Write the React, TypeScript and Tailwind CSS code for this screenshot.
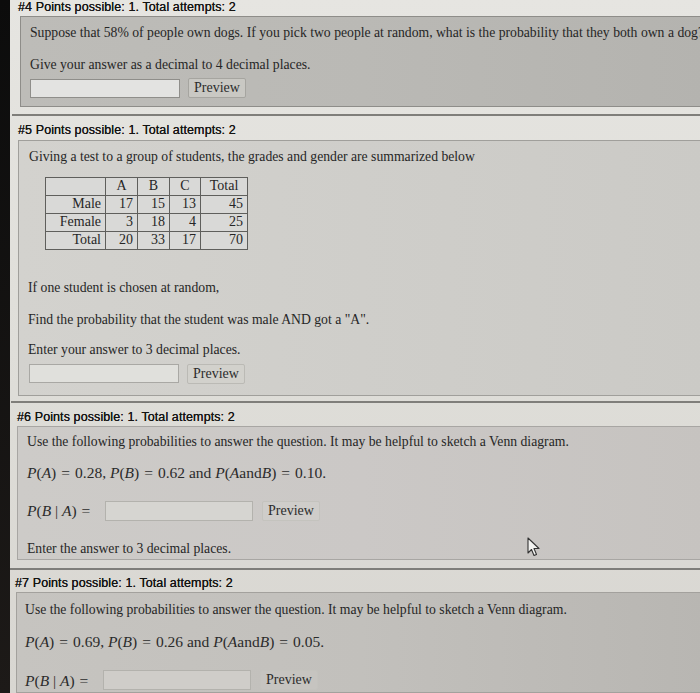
import React from "react";

const serif = "font-['Liberation_Serif','Times_New_Roman',serif]";
const sans = "font-['Liberation_Sans',Arial,sans-serif]";

function Header({ num, className }: { num: number; className: string }) {
  return (
    <div className={`${sans} text-[12.5px] leading-[17px] text-[#141414] tracking-[0.1px] [text-shadow:0_0_0.4px_#141414] ${className}`}>
      #{num} Points possible: 1. Total attempts: 2
    </div>
  );
}

function Divider({ className }: { className: string }) {
  return <div className={`h-[2px] bg-[#7f7e7a] ${className}`} />;
}

function PreviewBtn({ className }: { className: string }) {
  return (
    <button
      className={`${serif} text-[14px] leading-none text-[#2c2c2c] border border-[#a6a5a0] rounded-[2px] flex items-center justify-center ${className}`}>
      Preview
    </button>
  );
}

function Var({ children }: { children: React.ReactNode }) {
  return <i className="italic">{children}</i>;
}

function Eq() {
  return <span className="mx-[5px]">=</span>;
}

function MathLine({ a, b, ab }: { a: string; b: string; ab: string }) {
  return (
    <div className={`${serif} text-[15.5px] leading-[18px] text-[#2b2b2b]`}>
      <Var>P</Var>(<Var>A</Var>)<Eq />
      {a}, <Var>P</Var>(<Var>B</Var>)<Eq />
      {b} and <Var>P</Var>(<Var>A</Var>and<Var>B</Var>)<Eq />
      {ab}.
    </div>
  );
}

function CondRow({ inputBg, btnBg, className }: { inputBg: string; btnBg: string; className: string }) {
  return (
    <div className={`flex items-center ${className}`}>
      <div className={`${serif} text-[15.5px] text-[#2b2b2b] w-[78px]`}>
        <Var>P</Var>(<Var>B</Var> | <Var>A</Var>)<Eq />
      </div>
      <div className={`w-[148px] h-[20px] border border-[#b3b2ad] ${inputBg}`} />
      <PreviewBtn className={`ml-[9px] w-[58px] h-[20px] border-[#c4c3be] ${btnBg}`} />
    </div>
  );
}

const rows = [
  ["Male", "17", "15", "13", "45"],
  ["Female", "3", "18", "4", "25"],
  ["Total", "20", "33", "17", "70"],
];

function Table() {
  const cell = "border border-[#5f5f5c] px-[4px] h-[18px] leading-[16px]";
  return (
    <table className={`${serif} text-[14px] text-[#262626] border-collapse bg-[#d9d9d7] ml-[16px] mt-[12px]`}>
      <thead>
        <tr>
          <th className={`${cell} w-[60px] font-normal`} />
          <th className={`${cell} w-[32px] font-normal text-center`}>A</th>
          <th className={`${cell} w-[32px] font-normal text-center`}>B</th>
          <th className={`${cell} w-[31px] font-normal text-center`}>C</th>
          <th className={`${cell} w-[47px] font-normal text-center`}>Total</th>
        </tr>
      </thead>
      <tbody>
        {rows.map((r) => (
          <tr key={r[0]}>
            {r.map((v, i) => (
              <td key={i} className={`${cell} text-right`}>
                {v}
              </td>
            ))}
          </tr>
        ))}
      </tbody>
    </table>
  );
}

export default function App() {
  const text = `${serif} text-[13.7px] leading-[16px] text-[#262626] whitespace-nowrap`;
  return (
    <div className="w-[700px] h-[693px] overflow-hidden flex relative bg-[#e2e1dd]">
      {/* monitor bezel */}
      <div className="w-[10px] shrink-0 bg-gradient-to-b from-[#0c0c0c] to-[#1d1a18]" />

      <div className="flex-1 flex flex-col bg-gradient-to-b from-[#e6e5e1] via-[#dfded9] to-[#d8d6d1]">
        {/* #4 */}
        <Header num={4} className="pl-[8px] h-[17px] -mt-[1px]" />
        <div className="ml-[10px] h-[91px] bg-gradient-to-r from-[#bdbcb8] via-[#bab9b5] to-[#b4b3af] border border-[#8e8d89] pl-[9px] pt-[8px]">
          <div className={text}>
            Suppose that 58% of people own dogs. If you pick two people at random, what is the probability that they both own a dog?
          </div>
          <div className={`${text} mt-[16px]`}>Give your answer as a decimal to 4 decimal places.</div>
          <div className="flex items-center mt-[5px]">
            <div className="w-[150px] h-[19px] bg-[#e3e3e1] border border-[#8f8e8a]" />
            <PreviewBtn className="ml-[8px] w-[58px] h-[20px] bg-[#c9c8c3]" />
          </div>
        </div>

        <Divider className="mt-[7px] ml-[2px]" />

        {/* #5 */}
        <Header num={5} className="pl-[8px] mt-[6px] h-[18px]" />
        <div className="ml-[8px] h-[258px] bg-gradient-to-r from-[#d3d2ce] via-[#cfceca] to-[#cbcac6] border border-[#a09f9b] pl-[10px] pt-[8px]">
          <div className={text}>Giving a test to a group of students, the grades and gender are summarized below</div>
          <Table />
          <div className={`${text} mt-[30px] -ml-[1px]`}>If one student is chosen at random,</div>
          <div className={`${text} mt-[16px] -ml-[1px]`}>Find the probability that the student was male AND got a "A".</div>
          <div className={`${text} mt-[14px] -ml-[1px]`}>Enter your answer to 3 decimal places.</div>
          <div className="flex items-center mt-[6px]">
            <div className="w-[150px] h-[19px] bg-[#e0e0dc] border border-[#a9a8a4]" />
            <PreviewBtn className="ml-[8px] w-[58px] h-[20px] bg-[#d2d1cc] border-[#bbbab5]" />
          </div>
        </div>

        <Divider className="mt-[5px] ml-[1px]" />

        {/* #6 */}
        <Header num={6} className="pl-[7px] mt-[6px] h-[17px]" />
        <div className="ml-[7px] h-[134px] bg-gradient-to-r from-[#cdcbc8] via-[#cbc8c6] to-[#c6c3c0] border border-[#a8a6a3] pl-[9px] pt-[7px]">
          <div className={text}>
            Use the following probabilities to answer the question. It may be helpful to sketch a Venn diagram.
          </div>
          <div className="mt-[14px]">
            <MathLine a="0.28" b="0.62" ab="0.10" />
          </div>
          <CondRow inputBg="bg-[#d6d5d1]" btnBg="bg-[#cfcdca]" className="mt-[17px]" />
          <div className={`${text} mt-[18px]`}>Enter the answer to 3 decimal places.</div>
        </div>

        <Divider className="mt-[8px]" />

        {/* #7 */}
        <Header num={7} className="pl-[5px] mt-[5px] h-[17px]" />
        <div className="ml-[6px] flex-1 bg-gradient-to-r from-[#c6c4c0] via-[#c2c0bc] to-[#b8b6b2] border border-[#a3a19d] pl-[8px] pt-[9px]">
          <div className={text}>
            Use the following probabilities to answer the question. It may be helpful to sketch a Venn diagram.
          </div>
          <div className="mt-[15px]">
            <MathLine a="0.69" b="0.26" ab="0.05" />
          </div>
          <CondRow inputBg="bg-[#cfcdc9]" btnBg="bg-[#c6c4c0]" className="mt-[18px]" />
        </div>
      </div>

      {/* mouse cursor */}
      <svg className="absolute left-[527px] top-[537px]" width="14" height="20" viewBox="0 0 14 20">
        <path d="M1 1 L1 16 L4.5 12.5 L7 18.5 L9.5 17.5 L7 11.5 L12 11.5 Z" fill="#f2f2f0" stroke="#333" strokeWidth="1.1" strokeLinejoin="round" />
      </svg>
    </div>
  );
}
